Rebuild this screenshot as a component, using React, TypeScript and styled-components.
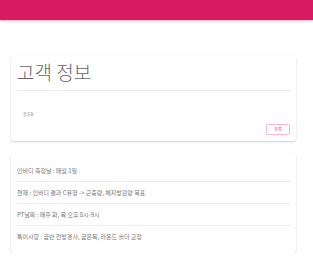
import styled, { createGlobalStyle } from "styled-components";

const GlobalStyle = createGlobalStyle`
  html, body {
    margin: 0;
    padding: 0;
    background: #fff;
    font-family: "Noto Sans CJK KR", "Noto Sans", sans-serif;
  }
`;

const Header = styled.header`
  height: 20px;
  background-color: #d81b60;
  box-shadow: 0 1px 3px rgba(0, 0, 0, 0.25);
`;

const Main = styled.main`
  padding: 36px 17px 0 11px;
  display: flex;
  flex-direction: column;
  gap: 13px;
`;

const Card = styled.section`
  background: #fff;
  border-radius: 2px;
  box-shadow: 0 1px 2px rgba(0, 0, 0, 0.18), 0 0 1px rgba(0, 0, 0, 0.08);
  padding: 0 6px 6px;
`;

const Title = styled.h1`
  margin: 0;
  padding: 2px 0 5px;
  font-size: 19px;
  line-height: 27px;
  font-weight: 300;
  color: #666;
  border-bottom: 1px solid #eee;
`;

const Name = styled.div`
  padding: 20px 0 0 6px;
  font-size: 4px;
  line-height: 6px;
  color: #888;
`;

const Actions = styled.div`
  display: flex;
  justify-content: flex-end;
  margin-top: 7px;
`;

const ListButton = styled.button`
  width: 24px;
  height: 11px;
  padding: 0;
  border: 1px solid #f8bbd0;
  border-radius: 1px;
  background: #fff;
  color: #e91e63;
  font-family: inherit;
  font-size: 4px;
  line-height: 9px;
`;

const InfoCard = styled(Card)`
  padding-top: 6px;
`;

const Row = styled.div`
  height: 21px;
  display: flex;
  align-items: center;
  font-size: 6px;
  color: #777;
  & + & {
    border-top: 1px solid #eee;
  }
`;

const info = [
  "인바디 측정날 : 매월 1일",
  "현재 : 인바디 결과 C유형 -> 근중량, 체지방감량 목표",
  "PT날짜 : 매주 화, 목 오후 8시-9시",
  "특이사항 : 굽반 전방경사, 굽은목, 라운드 숄더 교정",
];

export default function App() {
  return (
    <>
      <GlobalStyle />
      <Header />
      <Main>
        <Card>
          <Title>고객 정보</Title>
          <Name>홍길동</Name>
          <Actions>
            <ListButton>목록</ListButton>
          </Actions>
        </Card>
        <InfoCard>
          {info.map((t) => (
            <Row key={t}>{t}</Row>
          ))}
        </InfoCard>
      </Main>
    </>
  );
}
